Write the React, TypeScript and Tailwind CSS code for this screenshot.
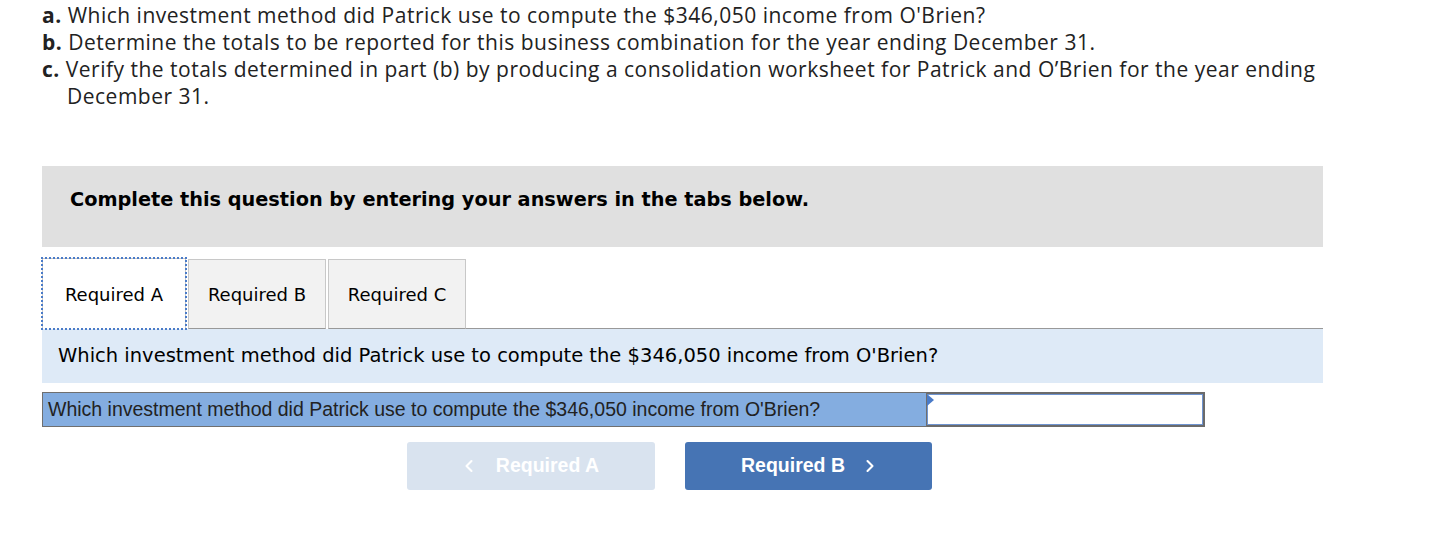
import { ChevronLeft, ChevronRight } from "lucide-react";

const tabs = ["Required A", "Required B", "Required C"];

export default function App() {
  return (
    <main className="min-h-screen bg-white px-[42px] pt-[2px] text-[#222]">
      <div className="font-['Open_Sans',sans-serif] text-[21px] leading-[27px] tracking-[0.5px]">
        <p>
          <b>a.</b> Which investment method did Patrick use to compute the $346,050 income from O'Brien?
        </p>
        <p>
          <b>b.</b> Determine the totals to be reported for this business combination for the year ending December 31.
        </p>
        <p className="whitespace-nowrap">
          <b>c.</b> Verify the totals determined in part (b) by producing a consolidation worksheet for Patrick and O’Brien for the year ending
        </p>
        <p className="pl-[25px]">December 31.</p>
      </div>

      <div className="mt-[56px] w-[1281px]">
        <div className="flex h-[81px] items-center bg-[#e0e0e0] px-[28px] pb-[12px] font-['DejaVu_Sans',sans-serif] text-[19.3px] font-bold text-black">
          Complete this question by entering your answers in the tabs below.
        </div>

        <div className="mt-[11px] flex items-end font-['DejaVu_Sans',sans-serif] text-[18px] text-black">
          {tabs.map((t, i) => (
            <div
              key={t}
              className={
                i === 0
                  ? "flex h-[71px] w-[144px] items-center justify-center border border-b-0 border-[#c8c8c8] bg-white outline-2 outline-dotted outline-[#4a7bc8] -outline-offset-1"
                  : "ml-[2px] flex h-[70px] w-[138px] items-center justify-center border border-[#c8c8c8] border-b-[#999] bg-[#f2f2f2]"
              }
            >
              {t}
            </div>
          ))}
          <div className="h-px flex-1 bg-[#999]" />
        </div>

        <div className="flex h-[54px] items-center bg-[#deeaf7] px-[16px] font-['DejaVu_Sans',sans-serif] text-[19.5px] text-black">
          Which investment method did Patrick use to compute the $346,050 income from O'Brien?
        </div>

        <div className="mt-[9px] flex h-[35px]">
          <div className="flex w-[885px] items-center border border-[#6f6f6f] bg-[#84ade0] px-[5px] font-['Liberation_Sans',sans-serif] text-[19.5px] text-[#222]">
            Which investment method did Patrick use to compute the $346,050 income from O'Brien?
          </div>
          <div className="relative w-[278px] border-2 border-l-0 border-[#6b6b6b] bg-white">
            <div className="h-full w-full border border-[#6f94d0]" />
            <span className="absolute left-0 top-0 h-0 w-0 border-y-[6px] border-l-[7px] border-y-transparent border-l-[#4a7bc8]" />
          </div>
        </div>

        <div className="mt-[15px] flex gap-[30px] pl-[365px] font-['Liberation_Sans',sans-serif] text-[19.5px] font-bold text-white">
          <button className="flex h-[48px] w-[248px] items-center justify-center gap-[17px] rounded-[3px] bg-[#d9e3ef] pl-[4px]">
            <ChevronLeft size={20} strokeWidth={2.5} className="-ml-[8px]" />
            <span>Required A</span>
          </button>
          <button className="flex h-[48px] w-[247px] items-center justify-center gap-[15px] rounded-[3px] bg-[#4674b4] pr-[4px]">
            <span>Required B</span>
            <ChevronRight size={20} strokeWidth={2.5} className="-mr-[8px]" />
          </button>
        </div>
      </div>
    </main>
  );
}
